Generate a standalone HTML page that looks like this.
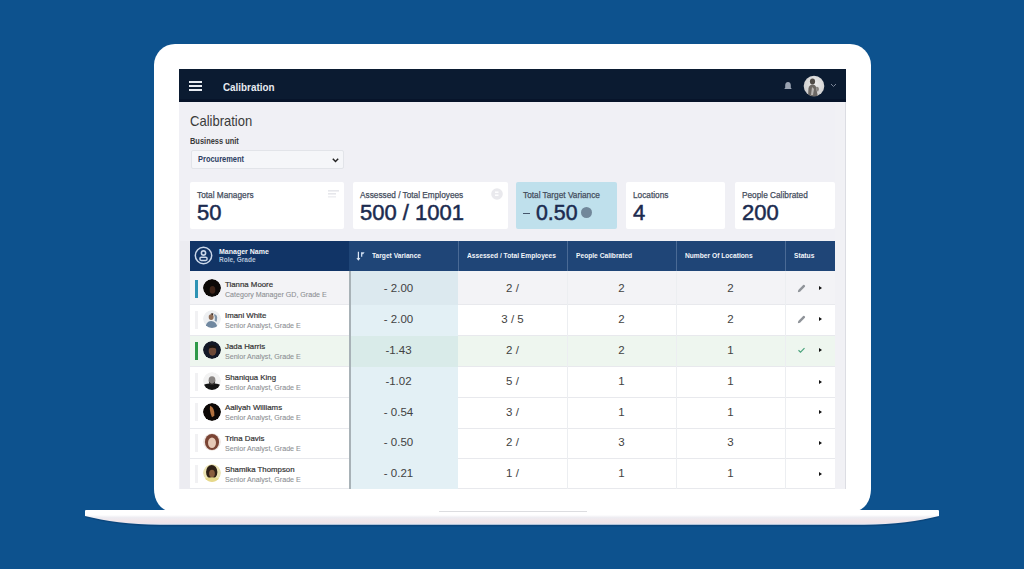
<!DOCTYPE html>
<html><head><meta charset="utf-8">
<style>
*{margin:0;padding:0;box-sizing:border-box}
html,body{width:1024px;height:569px;overflow:hidden}
body{background:#0d528e;font-family:"Liberation Sans",sans-serif;position:relative}
.abs{position:absolute}
#lid{left:154px;top:44px;width:717px;height:466.5px;background:#fff;border-radius:21px 21px 16px 16px / 21px 21px 22px 22px}
#base{left:85px;top:510px}
#screen{left:179px;top:69px;width:667px;height:420px;background:#f0f0f5;overflow:hidden}
#nav{left:-1px;top:0;width:667px;height:33px;background:#0b1b31;border-bottom:3px solid #07142a}
.t{position:absolute;white-space:nowrap;line-height:1}
.sx{transform-origin:0 0}
.card{position:absolute;top:113px;height:47px;background:#fff;border-radius:2px}
.card .lbl{position:absolute;left:7px;top:8.8px;font-size:9.2px;color:#434c5c;transform:scaleX(0.9);transform-origin:0 0;-webkit-text-stroke:0.25px #434c5c}
.card .val{position:absolute;left:7px;top:19.6px;font-size:22px;color:#1b2b4f;-webkit-text-stroke:0.5px #1b2b4f}
#thead{left:10px;top:172px;width:645px;height:30px;background:#1f4577}
.th{position:absolute;top:0;height:30px;color:#f2f5fa;font-weight:bold;font-size:7px;line-height:30px;transform:scaleX(0.95);transform-origin:0 0}
.hsep{position:absolute;top:0;width:1px;height:30px;background:#4a6a95}
.row{position:absolute;left:10px;width:645px;border-bottom:1px solid #e8e9ed}
.nm{font-size:8px;color:#333;transform:scaleX(0.98);transform-origin:0 0;-webkit-text-stroke:0.2px #333}
.rl{font-size:7.8px;color:#8d9094;-webkit-text-stroke:0.1px #8d9094;transform:scaleX(0.91);transform-origin:0 0}
.tvc{left:159px;top:0;width:109px;border-left:2px solid #a8b2b7}
.vsep{position:absolute;top:0;width:1px;background:#eceef1}
.arr{width:0;height:0;border-left:3px solid #111;border-top:2.5px solid transparent;border-bottom:2.5px solid transparent}
.cell{position:absolute;text-align:center;font-size:11.5px;color:#424242}
.tv{padding-right:10px}
</style></head><body>
<div id="lid" class="abs"></div>
<svg id="base" class="abs" width="854" height="17" viewBox="0 0 854 17">
  <defs><linearGradient id="bg1" x1="0" y1="0" x2="0" y2="1"><stop offset="0" stop-color="#ffffff"/><stop offset="0.33" stop-color="#ffffff"/><stop offset="0.5" stop-color="#eeedf2"/><stop offset="0.8" stop-color="#f1e4e8"/><stop offset="1" stop-color="#e6e6f0"/></linearGradient></defs>
  <path d="M0.5 6.8 C20 11.8 45 15.4 75 15.7 H779 C809 15.4 834 11.8 853.5 6.8" fill="none" stroke="#0a3f72" stroke-width="1.6" opacity="0.6"/>
  <path d="M0 1 Q0 0 1 0 H853 Q854 0 854 1 V6 C834 11 809 14.5 779 14.8 H75 C45 14.5 20 11 0 6 Z" fill="url(#bg1)"/>
  <rect x="354" y="1" width="148" height="1" fill="#dcdde0"/>
</svg>
<div id="screen" class="abs"><div class="abs" style="left:1px;top:0;width:666px;height:420px">
 <div id="nav" class="abs">
  <div class="abs" style="left:10px;top:12px;width:13px;height:2px;background:#e8ecf2"></div>
  <div class="abs" style="left:10px;top:16px;width:13px;height:2px;background:#e8ecf2"></div>
  <div class="abs" style="left:10px;top:20px;width:13px;height:2px;background:#e8ecf2"></div>
  <div class="t" style="left:44px;top:12.8px;font-size:10.6px;font-weight:bold;color:#e8ecf2;transform:scaleX(0.93);transform-origin:0 0">Calibration</div>
  <svg class="abs" style="left:604px;top:12px" width="10" height="10" viewBox="0 0 10 10"><path d="M5 1 Q2.2 1 2.2 4.5 L2.2 6.8 L1.2 8 L8.8 8 L7.8 6.8 L7.8 4.5 Q7.8 1 5 1Z" fill="#9aa3b2"/></svg>
  <svg class="abs" style="left:624px;top:6px" width="22" height="22" viewBox="0 0 22 22"><defs><clipPath id="navav"><circle cx="11" cy="11" r="10.3"/></clipPath><radialGradient id="ag" cx="0.55" cy="0.4" r="0.7"><stop offset="0" stop-color="#ededed"/><stop offset="0.75" stop-color="#cfcfcf"/><stop offset="1" stop-color="#a8a8a8"/></radialGradient></defs><g clip-path="url(#navav)"><rect width="22" height="22" fill="url(#ag)"/><ellipse cx="9.5" cy="6.5" rx="2.6" ry="3" fill="#4e4a46"/><path d="M5 22 L5.5 13 Q6.5 9.5 9.5 9.5 Q12.5 9.5 13 12 L15 22 Z" fill="#6c6864"/><path d="M9 12 L11 14 L10 20 L8 20 Z" fill="#b8b5b2"/><path d="M13 12 Q15.5 11 16 14 L15 17 L13.5 15Z" fill="#8a8682"/></g></svg>
  <svg class="abs" style="left:651px;top:14px" width="7" height="5" viewBox="0 0 7 5"><path d="M1 1 L3.5 3.5 L6 1" fill="none" stroke="#7b8597" stroke-width="1"/></svg>
 </div>
 <div class="t" style="left:10px;top:45.2px;font-size:14.3px;color:#3a3a3a;transform:scaleX(0.91);transform-origin:0 0">Calibration</div>
 <div class="t" style="left:10px;top:68px;font-size:9.2px;font-weight:bold;color:#3a3a3a;transform:scaleX(0.81);transform-origin:0 0">Business unit</div>
 <div class="abs" style="left:11px;top:80.5px;width:153px;height:19px;background:#f5f6f9;border:1px solid #e2e4e9;border-radius:2px"></div>
 <div class="t" style="left:18px;top:85.5px;font-size:8.3px;font-weight:bold;color:#2c4062;transform:scaleX(0.9);transform-origin:0 0">Procurement</div>
 <svg class="abs" style="left:151.5px;top:88.5px" width="7" height="5" viewBox="0 0 7 5"><path d="M0.8 0.8 L3.5 3.5 L6.2 0.8" fill="none" stroke="#222" stroke-width="1.5"/></svg>

 <div class="card" style="left:10px;width:154px"><div class="lbl t">Total Managers</div><div class="val t">50</div>
  <svg class="abs" style="left:138px;top:7px" width="12" height="10" viewBox="0 0 12 10"><rect x="0" y="1" width="11" height="1.6" fill="#e6e7eb"/><rect x="0" y="4" width="8" height="1.6" fill="#e6e7eb"/><rect x="0" y="7" width="8" height="1.6" fill="#eeeff2"/></svg></div>
 <div class="card" style="left:173px;width:155px"><div class="lbl t">Assessed / Total Employees</div><div class="val t">500 / 1001</div>
  <svg class="abs" style="left:138px;top:6px" width="12" height="12" viewBox="0 0 12 12"><circle cx="6" cy="6" r="5.8" fill="#e9e9ed"/><rect x="4" y="3.5" width="3.5" height="1.4" fill="#fff"/><rect x="4" y="6.5" width="3.5" height="1.4" fill="#fff"/></svg></div>
 <div class="card" style="left:336px;width:101px;background:#bfe0ec"><div class="lbl t">Total Target Variance</div>
  <div class="abs" style="left:7px;top:30.5px;width:7px;height:1.8px;background:#46566c"></div>
  <div class="val t" style="left:19.8px;transform:scaleX(0.97);transform-origin:0 0">0.50</div>
  <div class="abs" style="left:401px;top:24px;width:11px;height:11px;border-radius:50%;background:#71879a;left:65px;top:24.5px"></div></div>
 <div class="card" style="left:446px;width:99px"><div class="lbl t">Locations</div><div class="val t">4</div></div>
 <div class="card" style="left:555px;width:100px"><div class="lbl t">People Calibrated</div><div class="val t">200</div></div>

 <div id="thead" class="abs">
  <div class="abs" style="left:0;top:0;width:159px;height:30px;background:#113466"></div>
  <svg class="abs" style="left:4px;top:5px" width="19" height="19" viewBox="0 0 19 19"><circle cx="9.5" cy="9.5" r="8.2" fill="none" stroke="#cbd8ea" stroke-width="1.5"/><circle cx="9.5" cy="7" r="2.1" fill="none" stroke="#cbd8ea" stroke-width="1.6"/><rect x="5.9" y="11.3" width="7.2" height="3.2" rx="1.4" fill="none" stroke="#cbd8ea" stroke-width="1.5"/></svg>
  <div class="t" style="left:29px;top:6.8px;font-size:7px;font-weight:bold;color:#f4f6fa">Manager Name</div>
  <div class="t" style="left:29px;top:14.8px;font-size:7px;font-weight:bold;color:#b3c2d8;transform:scaleX(0.93);transform-origin:0 0">Role, Grade</div>
  <svg class="abs" style="left:166px;top:10px" width="10" height="10" viewBox="0 0 10 10"><path d="M2.4 0.8 V8.6" stroke="#dbe6f4" stroke-width="1.2"/><path d="M0.9 7 L2.4 8.9 L3.9 7" fill="none" stroke="#dbe6f4" stroke-width="1.1"/><path d="M5 1.2 H8.6 L7.2 3.2 H6.3 V5.8 H5 Z" fill="#c9d8ec"/></svg>
  <div class="th" style="left:182px;">Target Variance</div>
  <div class="th" style="left:277px;">Assessed / Total Employees</div>
  <div class="th" style="left:386px;">People Calibrated</div>
  <div class="th" style="left:495px;">Number Of Locations</div>
  <div class="th" style="left:604px;">Status</div>
  <div class="hsep" style="left:268px"></div><div class="hsep" style="left:377px"></div><div class="hsep" style="left:486px"></div><div class="hsep" style="left:595px"></div>
 </div>
<div class="row" style="top:202px;height:34px;background:#f3f3f6">
<div class="abs" style="left:5px;top:8.5px;width:2.5px;height:18px;background:#2f93b4"></div>
<svg class="abs" style="left:12.5px;top:8.0px" width="18" height="18" viewBox="0 0 19 19"><clipPath id="c0"><circle cx="9.5" cy="9.5" r="9.5"/></clipPath><g clip-path="url(#c0)"><circle cx="9.5" cy="9.5" r="9.5" fill="#0d0907"/><ellipse cx="10" cy="11.5" rx="3" ry="4" fill="#3f2418"/></g></svg>
<div class="t nm" style="left:35px;top:9.8px">Tianna Moore</div>
<div class="t rl" style="left:35px;top:19.9px">Category Manager GD, Grade E</div>
<div class="tvc abs" style="height:34px;background:#dce9ef"></div>
<div class="t cell tv" style="left:159px;width:109px;top:12.02px">- 2.00</div>
<div class="t cell" style="left:268px;width:109px;top:12.02px">2 /</div>
<div class="t cell" style="left:377px;width:109px;top:12.02px">2</div>
<div class="t cell" style="left:486px;width:109px;top:12.02px">2</div>
<div class="vsep" style="left:377px;height:34px"></div><div class="vsep" style="left:486px;height:34px"></div><div class="vsep" style="left:595px;height:34px"></div>
<svg class="abs" style="left:607px;top:12.5px" width="9" height="9" viewBox="0 0 9 9"><path d="M0.8 8.2 L1.3 6 L6.2 1.1 Q6.8 0.6 7.4 1.1 L7.9 1.6 Q8.4 2.2 7.9 2.8 L3 7.7 Z" fill="#8f9399"/></svg>
<div class="abs arr" style="left:629px;top:14.5px"></div>
</div>
<div class="row" style="top:236px;height:31px;background:#ffffff">
<div class="abs" style="left:5px;top:5.5px;width:2.5px;height:18px;background:#f1f1f3"></div>
<svg class="abs" style="left:12.5px;top:5.0px" width="18" height="18" viewBox="0 0 19 19"><clipPath id="c1"><circle cx="9.5" cy="9.5" r="9.5"/></clipPath><g clip-path="url(#c1)"><circle cx="9.5" cy="9.5" r="9.5" fill="#eef0f2"/><path d="M2.5 19 Q3 12 8.5 11.5 Q14 11.5 15.5 19 Z" fill="#7088a0"/><ellipse cx="8.6" cy="7.5" rx="2.6" ry="3" fill="#8e6e58"/><path d="M8 4.2 Q9 2.8 11 3.6 L10.5 5.5 Z" fill="#3a2a22"/><path d="M11.5 4.5 Q14.5 4.5 15 8 L14.5 12.5 L12.3 11.5 L12.5 8 Z" fill="#7d93a8"/></g></svg>
<div class="t nm" style="left:35px;top:6.8px">Imani White</div>
<div class="t rl" style="left:35px;top:16.9px">Senior Analyst, Grade E</div>
<div class="tvc abs" style="height:31px;background:#e3f0f5"></div>
<div class="t cell tv" style="left:159px;width:109px;top:9.02px">- 2.00</div>
<div class="t cell" style="left:268px;width:109px;top:9.02px">3 / 5</div>
<div class="t cell" style="left:377px;width:109px;top:9.02px">2</div>
<div class="t cell" style="left:486px;width:109px;top:9.02px">2</div>
<div class="vsep" style="left:377px;height:31px"></div><div class="vsep" style="left:486px;height:31px"></div><div class="vsep" style="left:595px;height:31px"></div>
<svg class="abs" style="left:607px;top:9.5px" width="9" height="9" viewBox="0 0 9 9"><path d="M0.8 8.2 L1.3 6 L6.2 1.1 Q6.8 0.6 7.4 1.1 L7.9 1.6 Q8.4 2.2 7.9 2.8 L3 7.7 Z" fill="#8f9399"/></svg>
<div class="abs arr" style="left:629px;top:11.5px"></div>
</div>
<div class="row" style="top:267px;height:31px;background:#eef6ef">
<div class="abs" style="left:5px;top:5.5px;width:2.5px;height:18px;background:#2e9a48"></div>
<svg class="abs" style="left:12.5px;top:5.0px" width="18" height="18" viewBox="0 0 19 19"><clipPath id="c2"><circle cx="9.5" cy="9.5" r="9.5"/></clipPath><g clip-path="url(#c2)"><circle cx="9.5" cy="9.5" r="9.5" fill="#121826"/><ellipse cx="10" cy="10.5" rx="4" ry="5" fill="#6e4a38"/><path d="M6 6 Q10 3 14 6 L14 8 Q10 6 6 8 Z" fill="#1b1410"/></g></svg>
<div class="t nm" style="left:35px;top:6.8px">Jada Harris</div>
<div class="t rl" style="left:35px;top:16.9px">Senior Analyst, Grade E</div>
<div class="tvc abs" style="height:31px;background:#d9ebe9"></div>
<div class="t cell tv" style="left:159px;width:109px;top:9.02px">-1.43</div>
<div class="t cell" style="left:268px;width:109px;top:9.02px">2 /</div>
<div class="t cell" style="left:377px;width:109px;top:9.02px">2</div>
<div class="t cell" style="left:486px;width:109px;top:9.02px">1</div>
<div class="vsep" style="left:377px;height:31px"></div><div class="vsep" style="left:486px;height:31px"></div><div class="vsep" style="left:595px;height:31px"></div>
<svg class="abs" style="left:607px;top:10.0px" width="9" height="8" viewBox="0 0 9 8"><path d="M1.5 4.3 L3.5 6.1 L7.5 2.1" fill="none" stroke="#4aa37c" stroke-width="1.2"/></svg>
<div class="abs arr" style="left:629px;top:11.5px"></div>
</div>
<div class="row" style="top:298px;height:31px;background:#ffffff">
<div class="abs" style="left:5px;top:5.5px;width:2.5px;height:18px;background:#f1f1f3"></div>
<svg class="abs" style="left:12.5px;top:5.0px" width="18" height="18" viewBox="0 0 19 19"><clipPath id="c3"><circle cx="9.5" cy="9.5" r="9.5"/></clipPath><g clip-path="url(#c3)"><circle cx="9.5" cy="9.5" r="9.5" fill="#f2f2f2"/><path d="M0 14 Q4 11.5 9.5 12.5 Q15 11.5 19 14 L19 19 L0 19Z" fill="#141414"/><ellipse cx="9.5" cy="8.8" rx="3.6" ry="4.4" fill="#8a8684"/><path d="M6.5 10 Q9.5 15 12.5 10 L12.5 12.5 Q9.5 15.5 6.5 12.5Z" fill="#2a2826"/></g></svg>
<div class="t nm" style="left:35px;top:6.8px">Shaniqua King</div>
<div class="t rl" style="left:35px;top:16.9px">Senior Analyst, Grade E</div>
<div class="tvc abs" style="height:31px;background:#e3f0f5"></div>
<div class="t cell tv" style="left:159px;width:109px;top:9.02px">-1.02</div>
<div class="t cell" style="left:268px;width:109px;top:9.02px">5 /</div>
<div class="t cell" style="left:377px;width:109px;top:9.02px">1</div>
<div class="t cell" style="left:486px;width:109px;top:9.02px">1</div>
<div class="vsep" style="left:377px;height:31px"></div><div class="vsep" style="left:486px;height:31px"></div><div class="vsep" style="left:595px;height:31px"></div>

<div class="abs arr" style="left:629px;top:12.5px"></div>
</div>
<div class="row" style="top:329px;height:31px;background:#ffffff">
<div class="abs" style="left:5px;top:5.0px;width:2.5px;height:18px;background:#f1f1f3"></div>
<svg class="abs" style="left:12.5px;top:4.5px" width="18" height="18" viewBox="0 0 19 19"><clipPath id="c4"><circle cx="9.5" cy="9.5" r="9.5"/></clipPath><g clip-path="url(#c4)"><circle cx="9.5" cy="9.5" r="9.5" fill="#0c0806"/><path d="M7.5 3 Q12.5 5 12 13.5 L9.5 15 Q6.5 9 7.5 3Z" fill="#b0703e"/></g></svg>
<div class="t nm" style="left:35px;top:6.3px">Aaliyah Williams</div>
<div class="t rl" style="left:35px;top:16.4px">Senior Analyst, Grade E</div>
<div class="tvc abs" style="height:31px;background:#e3f0f5"></div>
<div class="t cell tv" style="left:159px;width:109px;top:8.52px">- 0.54</div>
<div class="t cell" style="left:268px;width:109px;top:8.52px">3 /</div>
<div class="t cell" style="left:377px;width:109px;top:8.52px">1</div>
<div class="t cell" style="left:486px;width:109px;top:8.52px">1</div>
<div class="vsep" style="left:377px;height:31px"></div><div class="vsep" style="left:486px;height:31px"></div><div class="vsep" style="left:595px;height:31px"></div>

<div class="abs arr" style="left:629px;top:12.0px"></div>
</div>
<div class="row" style="top:360px;height:30px;background:#ffffff">
<div class="abs" style="left:5px;top:4.5px;width:2.5px;height:18px;background:#f1f1f3"></div>
<svg class="abs" style="left:12.5px;top:4.0px" width="18" height="18" viewBox="0 0 19 19"><clipPath id="c5"><circle cx="9.5" cy="9.5" r="9.5"/></clipPath><g clip-path="url(#c5)"><circle cx="9.5" cy="9.5" r="9.5" fill="#efe6e2"/><ellipse cx="9.5" cy="9.5" rx="7.5" ry="8.5" fill="#7a4434"/><ellipse cx="9.5" cy="10.3" rx="4.2" ry="5.6" fill="#e6c9b6"/></g></svg>
<div class="t nm" style="left:35px;top:5.8px">Trina Davis</div>
<div class="t rl" style="left:35px;top:15.9px">Senior Analyst, Grade E</div>
<div class="tvc abs" style="height:30px;background:#e3f0f5"></div>
<div class="t cell tv" style="left:159px;width:109px;top:8.02px">- 0.50</div>
<div class="t cell" style="left:268px;width:109px;top:8.02px">2 /</div>
<div class="t cell" style="left:377px;width:109px;top:8.02px">3</div>
<div class="t cell" style="left:486px;width:109px;top:8.02px">3</div>
<div class="vsep" style="left:377px;height:30px"></div><div class="vsep" style="left:486px;height:30px"></div><div class="vsep" style="left:595px;height:30px"></div>

<div class="abs arr" style="left:629px;top:11.5px"></div>
</div>
<div class="row" style="top:390px;height:30px;background:#ffffff">
<div class="abs" style="left:5px;top:5.5px;width:2.5px;height:18px;background:#f1f1f3"></div>
<svg class="abs" style="left:12.5px;top:5.0px" width="18" height="18" viewBox="0 0 19 19"><clipPath id="c6"><circle cx="9.5" cy="9.5" r="9.5"/></clipPath><g clip-path="url(#c6)"><circle cx="9.5" cy="9.5" r="9.5" fill="#ece4b4"/><ellipse cx="9.2" cy="8.5" rx="6" ry="7.5" fill="#2e2016"/><ellipse cx="9.5" cy="10" rx="3" ry="4" fill="#8a5e3e"/><path d="M0 16 Q9.5 12 19 16 L19 19 L0 19Z" fill="#e6d88a"/></g></svg>
<div class="t nm" style="left:35px;top:6.8px">Shamika Thompson</div>
<div class="t rl" style="left:35px;top:16.9px">Senior Analyst, Grade E</div>
<div class="tvc abs" style="height:30px;background:#e3f0f5"></div>
<div class="t cell tv" style="left:159px;width:109px;top:9.02px">- 0.21</div>
<div class="t cell" style="left:268px;width:109px;top:9.02px">1 /</div>
<div class="t cell" style="left:377px;width:109px;top:9.02px">1</div>
<div class="t cell" style="left:486px;width:109px;top:9.02px">1</div>
<div class="vsep" style="left:377px;height:30px"></div><div class="vsep" style="left:486px;height:30px"></div><div class="vsep" style="left:595px;height:30px"></div>

<div class="abs arr" style="left:629px;top:12.5px"></div>
</div>
 <div class="abs" style="left:655px;top:33px;width:11px;height:387px;background:#f1f1f5;border-right:1px solid #dcdde3"></div>
 <div class="abs" style="left:0;top:172px;width:10px;height:248px;background:#ececf1"></div>
</div></div>
</body></html>
